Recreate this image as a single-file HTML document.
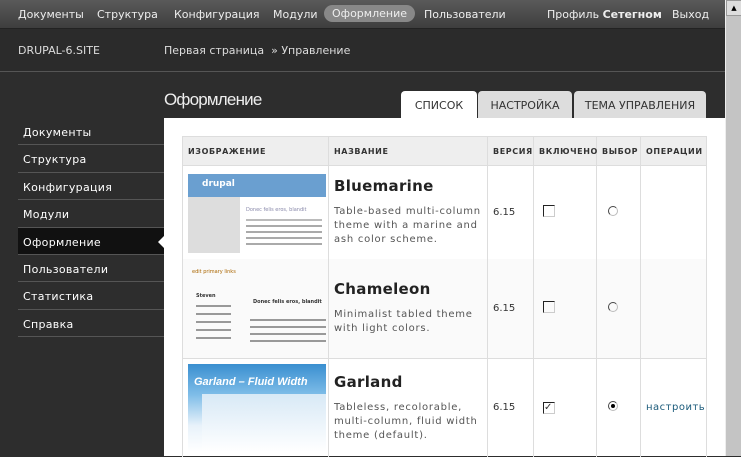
<!DOCTYPE html>
<html><head><meta charset="utf-8"><style>
*{margin:0;padding:0;box-sizing:border-box}
body{width:741px;height:456px;overflow:hidden;background:#2d2d2d;font-family:"DejaVu Sans","Liberation Sans",sans-serif;position:relative}
.top{position:absolute;left:0;top:0;width:725px;height:29px;background:linear-gradient(#5a5a5a,#3e3e3e);border-bottom:1px solid #222}
.top span{position:absolute;top:8px;font-size:11px;color:#eee}
.pill{background:#888;border-radius:9px;padding:2px 8px;top:5px!important}
.hdr{position:absolute;left:0;top:29px;width:725px;height:43px;background:#2b2b2b;border-bottom:1px solid #555}
.hdr span{position:absolute;top:15px;font-size:11px;color:#ddd}
.side{position:absolute;left:18px;top:118px;width:146px}
.side div{height:27.4px;border-bottom:1px solid #555;color:#fff;font-size:11px;padding:8px 0 0 5px;letter-spacing:.3px;position:relative}
.side .act{background:#111}
.side .act:after{content:"";position:absolute;right:0;top:8px;border:6px solid transparent;border-right-color:#fff;border-left:none}
h1{position:absolute;left:164px;top:90px;font-weight:normal;font-size:17px;color:#eee;font-family:"Liberation Sans",sans-serif;letter-spacing:-.8px}
.tab{position:absolute;top:91px;height:27px;font-size:11px;color:#333;text-align:center;padding-top:8px;border-radius:4px 4px 0 0;background:#ddd}
.panel{position:absolute;left:164px;top:118px;width:561px;height:338px;background:#fff}
table{position:absolute;left:182px;top:136px;border-collapse:collapse;width:525px;font-size:10px;color:#333;table-layout:fixed}
th{background:#eee;height:29px;text-align:left;font-size:8px;padding-left:5px;letter-spacing:.6px;border:1px solid #ddd;font-family:"DejaVu Sans",sans-serif}
td{border-left:1px solid #ddd;border-right:1px solid #ddd;vertical-align:middle;padding-left:5px}
tr.r2 td{background:#fafafa}
tr.r3 td{border-top:1px solid #ddd}
.nm{font-size:15px;font-weight:bold;color:#222;margin-bottom:10px;font-family:"DejaVu Sans",sans-serif;letter-spacing:.3px}
.ds{font-size:10px;line-height:14px;color:#555;letter-spacing:.75px;width:152px}
.cb{display:inline-block;width:12px;height:12px;border:1px solid #222;border-right-color:#ccc;border-bottom-color:#ccc;margin-left:4px;font-size:10px;line-height:10px;font-weight:bold}
.rd{display:inline-block;width:10px;height:10px;border:1px solid #444;border-right-color:#bbb;border-bottom-color:#bbb;border-radius:50%;margin-left:6px;position:relative}
.thumb{width:138px;height:82px;position:relative;overflow:hidden}
.scroll{position:absolute;left:725px;top:0;width:16px;height:456px;background:#c4c4c4;border-left:1px solid #eee}
.scroll div{width:16px;height:16px;background:#ddd;border:1px solid #999;font-size:7px;text-align:center;line-height:14px}
.ln{position:absolute;height:2px;background:#999}
</style></head><body>
<div class="top">
<span style="left:18px">Документы</span><span style="left:97px">Структура</span><span style="left:174px">Конфигурация</span><span style="left:273px">Модули</span><span class="pill" style="left:324px">Оформление</span><span style="left:424px">Пользователи</span><span style="left:547px">Профиль <b>Сетегном</b></span><span style="left:672px">Выход</span>
</div>
<div class="hdr"><span style="left:18px">DRUPAL-6.SITE</span><span style="left:164px">Первая страница &nbsp;» Управление</span></div>
<div class="side">
<div>Документы</div><div>Структура</div><div>Конфигурация</div><div>Модули</div><div class="act">Оформление</div><div>Пользователи</div><div>Статистика</div><div>Справка</div>
</div>
<h1>Оформление</h1>
<div class="tab" style="left:401px;width:76px;background:#fff">СПИСОК</div>
<div class="tab" style="left:478px;width:94px">НАСТРОЙКА</div>
<div class="tab" style="left:574px;width:132px">ТЕМА УПРАВЛЕНИЯ</div>
<div class="panel"></div>
<table>
<tr><th style="width:146px">ИЗОБРАЖЕНИЕ</th><th style="width:159px">НАЗВАНИЕ</th><th style="width:46px">ВЕРСИЯ</th><th style="width:63px">ВКЛЮЧЕНО</th><th style="width:44px">ВЫБОР</th><th>ОПЕРАЦИИ</th></tr>
<tr style="height:93px"><td><div class="thumb" style="background:#fff">
<div style="position:absolute;left:0;top:3px;width:138px;height:23px;background:#6a9fd0;color:#fff;font-size:9px;font-weight:bold;padding:5px 0 0 14px">drupal</div>
<div style="position:absolute;left:0;top:26px;width:52px;height:56px;background:#ddd"></div>
<div style="position:absolute;left:58px;top:36px;font-size:5px;color:#88a">Donec felis eros, blandit</div>
<div class="ln" style="left:58px;top:48px;width:76px;background:#bbb"></div><div class="ln" style="left:58px;top:54px;width:76px;background:#aaa"></div><div class="ln" style="left:58px;top:60px;width:76px;background:#aaa"></div><div class="ln" style="left:58px;top:66px;width:76px;background:#aaa"></div><div class="ln" style="left:58px;top:72px;width:76px;background:#aaa"></div>
</div></td><td><div class="nm">Bluemarine</div><div class="ds">Table-based multi-column theme with a marine and ash color scheme.</div></td><td>6.15</td><td><span class="cb"></span></td><td><span class="rd"></span></td><td></td></tr>
<tr class="r2" style="height:100px"><td><div class="thumb" style="height:90px">
<div style="position:absolute;left:4px;top:6px;font-size:5px;color:#a60">edit primary links</div>
<div style="position:absolute;left:8px;top:30px;font-size:5px;font-weight:bold">Steven</div>
<div style="position:absolute;left:65px;top:36px;font-size:5px;font-weight:bold">Donec felis eros, blandit</div>
<div class="ln" style="left:8px;top:42px;width:35px"></div><div class="ln" style="left:8px;top:50px;width:35px"></div><div class="ln" style="left:8px;top:58px;width:35px"></div><div class="ln" style="left:8px;top:66px;width:35px"></div><div class="ln" style="left:8px;top:74px;width:35px"></div>
<div class="ln" style="left:62px;top:56px;width:76px"></div><div class="ln" style="left:62px;top:63px;width:76px"></div><div class="ln" style="left:62px;top:70px;width:76px"></div><div class="ln" style="left:62px;top:77px;width:76px"></div>
</div></td><td><div class="nm">Chameleon</div><div class="ds">Minimalist tabled theme with light colors.</div></td><td>6.15</td><td><span class="cb"></span></td><td><span class="rd"></span></td><td></td></tr>
<tr class="r3" style="height:98px"><td><div class="thumb" style="height:88px;background:linear-gradient(#fff,#fff)">
<div style="position:absolute;left:0;top:0;width:138px;height:88px;background:linear-gradient(#3a8fd0 0,#7fbde8 35%,#e8f2fa 70%,#fff)"></div>
<div style="position:absolute;left:6px;top:12px;color:#fff;font-size:11px;font-style:italic;font-weight:bold;font-family:'Liberation Sans',sans-serif">Garland – Fluid Width</div>
<div style="position:absolute;left:14px;top:30px;width:124px;height:58px;background:linear-gradient(#d8e9f6,#fff)"></div>
</div></td><td><div class="nm">Garland</div><div class="ds">Tableless, recolorable, multi-column, fluid width theme (default).</div></td><td>6.15</td><td><span class="cb">✓</span></td><td><span class="rd"><i style="position:absolute;left:2px;top:2px;width:4px;height:4px;background:#000;border-radius:50%"></i></span></td><td style="color:#1a5a7a;letter-spacing:.5px">настроить</td></tr>
</table>
<div class="scroll"><div>▲</div></div>
</body></html>
